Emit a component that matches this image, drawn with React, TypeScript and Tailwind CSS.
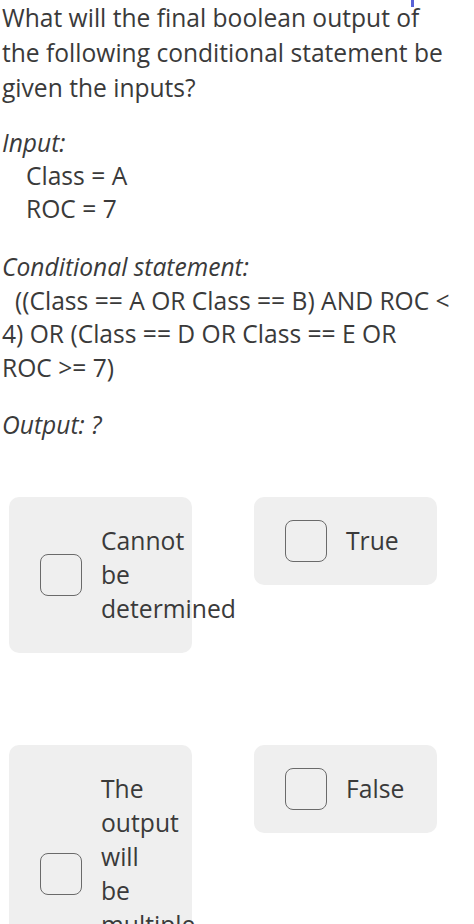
import React from "react";

const font = { fontFamily: '"Open Sans", "Noto Sans", sans-serif' };

function Box() {
  return (
    <div className="h-[42px] w-[42px] shrink-0 -my-1 rounded-[8px] border-[1.5px] border-[#6a6a6a]" />
  );
}

function Option({ text }: { text: string }) {
  return (
    <div className="flex items-center rounded-[10px] bg-[#efefef] pl-[31px] pr-[30px] py-[27px] w-[183px] self-start">
      <Box />
      <div className="ml-[19px] w-[60px] text-[24.7px] leading-[34px] text-[#3a3a3a]">{text}</div>
    </div>
  );
}

export default function App() {
  return (
    <div className="relative h-[924px] w-[474px] overflow-hidden bg-white text-[#3a3a3a]" style={font}>
      <div className="absolute left-[411px] top-0 h-[7px] w-[3px] bg-[#5a62d6]" />
      <div className="pl-[2px]">
        <p className="text-[24.6px] leading-[35px]">
          <span className="block whitespace-nowrap">What will the final boolean output of</span>
          <span className="block whitespace-nowrap">the following conditional statement be</span>
          <span className="block whitespace-nowrap">given the inputs?</span>
        </p>
        <div className="mt-[21px] text-[24.6px] leading-[33px]">
          <p className="italic">Input:</p>
          <p className="pl-[24px]">Class = A</p>
          <p className="pl-[24px]">ROC = 7</p>
        </div>
        <div className="mt-[25px] text-[24.6px] leading-[33.5px]">
          <p className="italic">Conditional statement:</p>
          <p>
            <span className="block whitespace-nowrap pl-[13px]">((Class == A OR Class == B) AND ROC &lt;</span>
            <span className="block whitespace-nowrap">4) OR (Class == D OR Class == E OR</span>
            <span className="block whitespace-nowrap">ROC &gt;= 7)</span>
          </p>
        </div>
        <div className="mt-[24px] text-[24.6px] leading-[33px]">
          <p className="italic">Output: ?</p>
        </div>
      </div>
      <div className="mt-[56px] flex flex-col gap-[92px] pl-[9px]">
        <div className="flex gap-[62px]">
          <Option text="Cannot be determined" />
          <Option text="True" />
        </div>
        <div className="flex gap-[62px]">
          <Option text="The output will be multiple values" />
          <Option text="False" />
        </div>
      </div>
    </div>
  );
}
